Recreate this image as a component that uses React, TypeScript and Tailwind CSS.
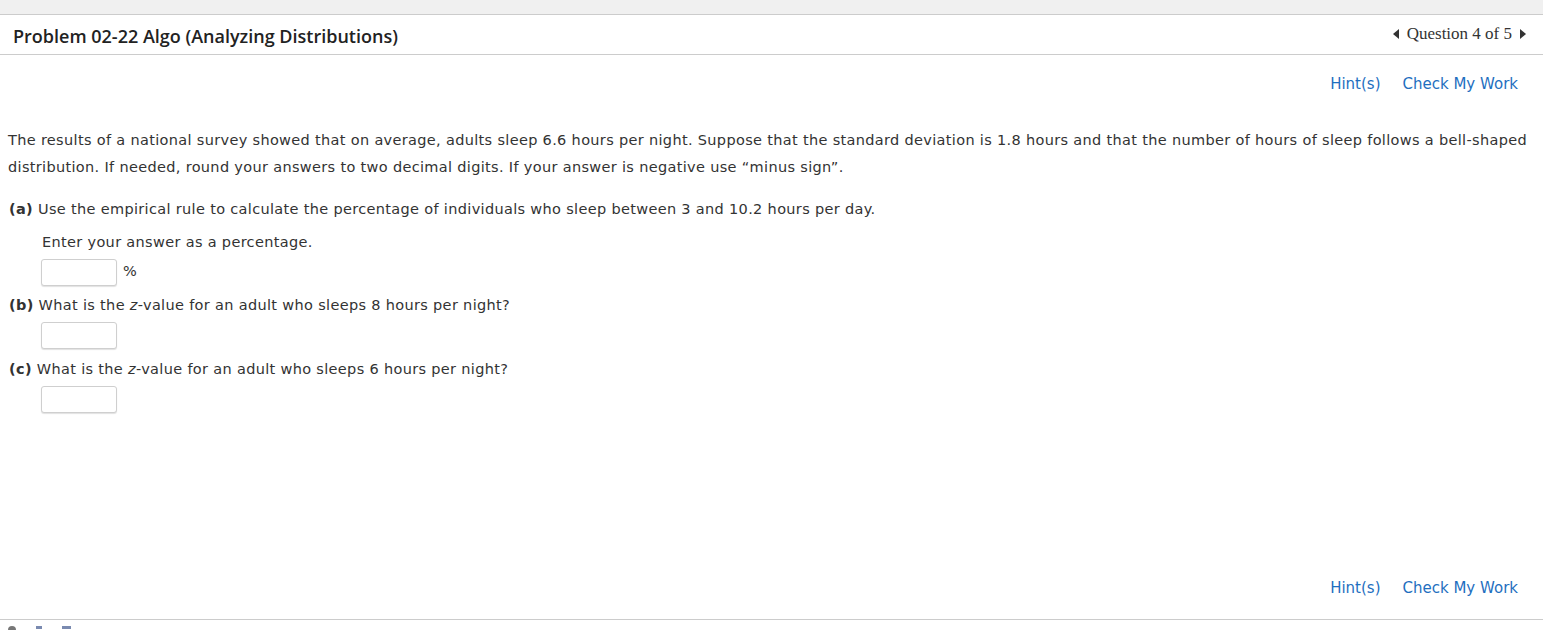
import React from "react";

const body = { fontFamily: '"DejaVu Sans", Verdana, sans-serif', letterSpacing: "0.33px" };

function Box() {
  return (
    <div className="w-[76px] h-[27px] rounded-[3px] border border-[#cfcfcf] bg-white shadow-[0_1px_1px_rgba(0,0,0,0.12)]" />
  );
}

function Links() {
  return (
    <div
      className="flex justify-end gap-[22px] pr-[25px] text-[15px] text-[#1f6fbf]"
      style={{ fontFamily: '"DejaVu Sans", Verdana, sans-serif', letterSpacing: "0px" }}
    >
      <span>Hint(s)</span>
      <span>Check My Work</span>
    </div>
  );
}

export default function App() {
  return (
    <div className="w-[1543px] h-[631px] overflow-hidden bg-white text-[#222]">
      <div className="h-[15px] bg-[#f0f0f0] border-b border-[#cccccc]" />
      <div className="h-[40px] flex items-center justify-between pl-[13px] pr-[17px] border-b border-[#cccccc]">
        <div className="pt-[3px] text-[18px] font-semibold text-[#222]" style={{ fontFamily: '"Open Sans", sans-serif' }}>
          Problem 02-22 Algo (Analyzing Distributions)
        </div>
        <div className="flex items-center gap-[8px] text-[17px] text-[#333] pb-[1px]" style={{ fontFamily: '"Liberation Serif", serif' }}>
          <svg width="6" height="10" viewBox="0 0 6 10"><path d="M6 0 L0 5 L6 10 Z" fill="#333" /></svg>
          <span>Question 4 of 5</span>
          <svg width="6" height="10" viewBox="0 0 6 10"><path d="M0 0 L6 5 L0 10 Z" fill="#333" /></svg>
        </div>
      </div>
      <div className="h-[565px] flex flex-col border-b border-[#cccccc]" style={body}>
        <div className="pt-[18px]"><Links /></div>
        <div className="pt-[31px] pl-[8px] text-[14.5px] leading-[27px] text-[#333]">
          <span className="whitespace-nowrap">
            The results of a national survey showed that on average, adults sleep 6.6 hours per night. Suppose that the standard deviation is 1.8 hours and that the number of hours of sleep follows a bell-shaped
          </span>
          <br />
          distribution. If needed, round your answers to two decimal digits. If your answer is negative use “minus sign”.
        </div>
        <div className="pl-[9px] pt-[19px] text-[14.5px] text-[#333] flex flex-col">
          <div className="leading-[18px]"><b>(a)</b> Use the empirical rule to calculate the percentage of individuals who sleep between 3 and 10.2 hours per day.</div>
          <div className="pl-[33px] pt-[15px] leading-[18px]">Enter your answer as a percentage.</div>
          <div className="pl-[32px] pt-[8px] flex items-center gap-[6px]"><Box /><span>%</span></div>
          <div className="pt-[10px] leading-[18px]"><b>(b)</b> What is the <i>z</i>-value for an adult who sleeps 8 hours per night?</div>
          <div className="pl-[32px] pt-[8px]"><Box /></div>
          <div className="pt-[11px] leading-[18px]"><b>(c)</b> What is the <i>z</i>-value for an adult who sleeps 6 hours per night?</div>
          <div className="pl-[32px] pt-[8px]"><Box /></div>
        </div>
        <div className="mt-auto pb-[20px]"><Links /></div>
      </div>
      <div className="flex items-start gap-[20px] pl-[8px] pt-[6px]">
        <div className="w-[8px] h-[4px] bg-[#777] rounded-t-full" />
        <div className="w-[6px] h-[3px] bg-[#7a8ab0]" />
        <div className="w-[9px] h-[3px] bg-[#7a8ab0]" />
      </div>
    </div>
  );
}
